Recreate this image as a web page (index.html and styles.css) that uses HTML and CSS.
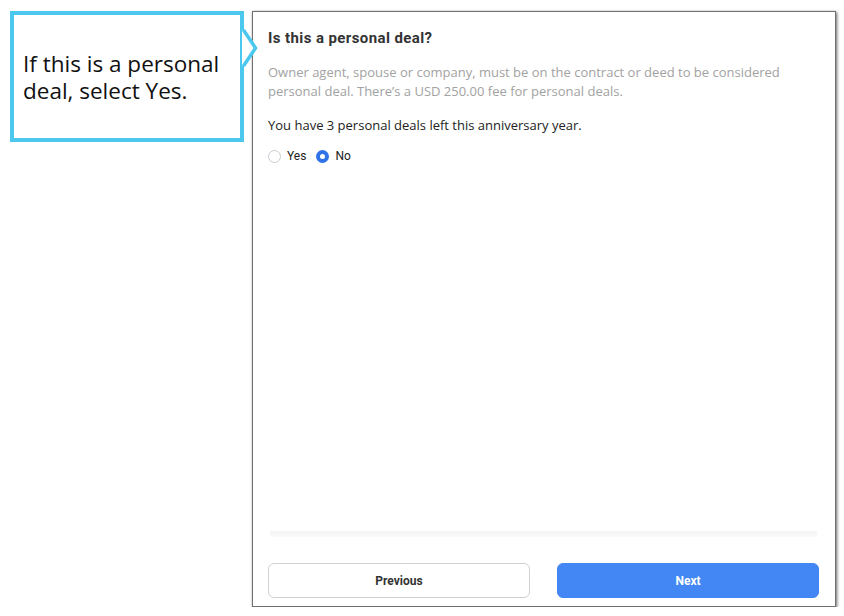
FILE: index.html
```html
<!DOCTYPE html>
<html>
<head>
<meta charset="utf-8">
<link rel="stylesheet" href="styles.css">
</head>
<body>
<div class="page">
  <div class="callout">
    <p class="callout-text">If this is a personal deal, select Yes.</p>
    <svg class="callout-arrow" width="20" height="44" viewBox="0 0 20 44">
      <polygon points="0,0 13,18 0,36" fill="#fff"/>
      <polyline points="1.5,0 13.5,18 1.5,36" fill="none" stroke="#4cc8ef" stroke-width="3.5" stroke-linejoin="miter"/>
    </svg>
  </div>
  <div class="frame">
    <div class="content">
      <h1 class="title">Is this a personal deal?</h1>
      <p class="note">Owner agent, spouse or company, must be on the contract or deed to be considered personal deal. There’s a USD 250.00 fee for personal deals.</p>
      <p class="info">You have 3 personal deals left this anniversary year.</p>
      <div class="radios">
        <label class="radio"><span class="dot"></span>Yes</label>
        <label class="radio"><span class="dot checked"></span>No</label>
      </div>
    </div>
    <div class="footer">
      <div class="divider"></div>
      <div class="buttons">
        <button class="btn btn-prev">Previous</button>
        <button class="btn btn-next">Next</button>
      </div>
    </div>
  </div>
</div>
</body>
</html>
```

FILE: styles.css
```css
html, body {
  margin: 0;
  padding: 0;
  background: #fff;
}
.page {
  display: flex;
  align-items: flex-start;
  gap: 8px;
  padding: 11px 0 0 10px;
}
.callout {
  position: relative;
  z-index: 2;
  box-sizing: border-box;
  width: 234px;
  height: 131px;
  border: 4px solid #4cc8ef;
  display: flex;
  align-items: center;
  padding: 0 9px;
}
.callout-text {
  margin: 0;
  font-family: "Open Sans", "Liberation Sans", sans-serif;
  font-size: 22.5px;
  line-height: 27px;
  color: #111;
}
.callout-arrow {
  position: absolute;
  left: 228px;
  top: 15px;
  overflow: visible;
}
.frame {
  box-sizing: border-box;
  width: 584px;
  height: 596px;
  border: 1px solid #6f6f6f;
  box-shadow: 1px 1px 3px rgba(0, 0, 0, 0.6);
  display: flex;
  flex-direction: column;
  background: #fff;
}
.content {
  flex: 1;
  padding: 17px 16px 0 15px;
}
.title {
  margin: 0;
  font-family: Roboto, "Liberation Sans", sans-serif;
  font-weight: 700;
  font-size: 15px;
  letter-spacing: 0.4px;
  line-height: 18px;
  color: #333;
}
.note {
  margin: 16px 0 0;
  font-family: "Open Sans", "Liberation Sans", sans-serif;
  font-size: 13px;
  line-height: 19px;
  color: #a2a2a2;
}
.info {
  margin: 14px 0 0;
  font-family: "Open Sans", "Liberation Sans", sans-serif;
  font-size: 13px;
  line-height: 20px;
  color: #222;
}
.radios {
  display: flex;
  gap: 10px;
  margin-top: 13px;
}
.radio {
  display: flex;
  align-items: center;
  gap: 6px;
  font-family: Roboto, "Liberation Sans", sans-serif;
  font-size: 12px;
  line-height: 16px;
  color: #222;
}
.dot {
  box-sizing: border-box;
  width: 13px;
  height: 13px;
  border-radius: 50%;
  border: 1px solid #c9cbd2;
  background: #fff;
}
.dot.checked {
  border: 4px solid #2f73e6;
  background: #fff;
}
.footer {
  padding: 0 16px 8px 15px;
}
.divider {
  height: 6px;
  margin: 0 2px;
  background: linear-gradient(#f3f3f3, #fbfbfb);
}
.buttons {
  display: flex;
  gap: 27px;
  margin-top: 26px;
}
.btn {
  flex: 1;
  height: 35px;
  border-radius: 6px;
  font-family: Roboto, "Liberation Sans", sans-serif;
  font-weight: 700;
  font-size: 12px;
  cursor: pointer;
}
.btn-prev {
  background: #fff;
  border: 1px solid #cfd1d6;
  color: #333;
}
.btn-next {
  background: #4287f3;
  border: 1px solid #4287f3;
  color: #fff;
}
```
